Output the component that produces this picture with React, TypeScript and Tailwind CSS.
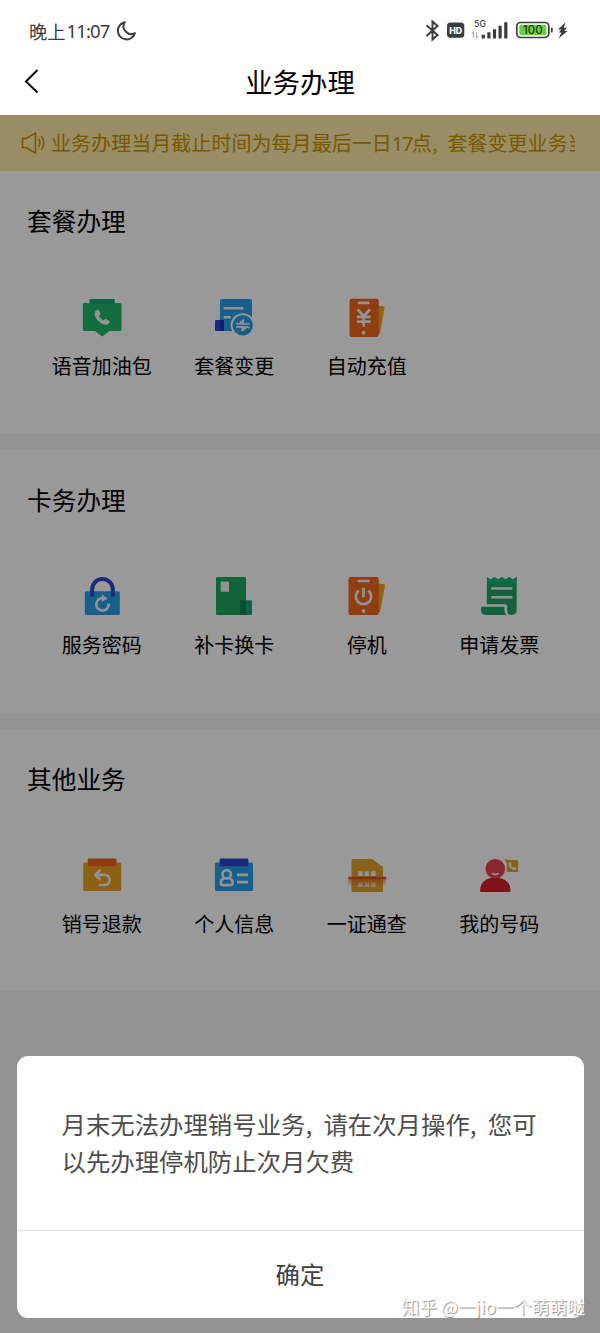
import { ReactNode } from 'react';

interface Service {
  label: string;
  icon: ReactNode;
}

interface ServiceGroup {
  title: string;
  items: Service[];
}

const LIGHT = '#f4f4f4';

function Icon({ children }: { children: ReactNode }) {
  return (
    <svg width="44" height="44" viewBox="0 0 44 44" fill="none">
      {children}
    </svg>
  );
}

const handset =
  'M-4.9 -7.2c-1.7 .6 -2.9 2 -2.6 4.2c.7 5 5.500 9.700 10.700 10.400c2 .2 3.800 -1 4.300 -2.700c.2 -.6 0 -1 -.5 -1.300l-3.200 -1.700c-.5 -.3 -1 -.2 -1.300 .2l-1.100 1.300c-2.200 -1 -3.700 -2.600 -4.600 -4.700l1.200 -1.200c.4 -.4 .4 -.8 .2 -1.300l-1.500 -3c-.3 -.5 -.9 -.5 -1.600 -.2z';

const groups: ServiceGroup[] = [
  {
    title: '套餐办理',
    items: [
      {
        label: '语音加油包',
        icon: (
          <Icon>
            <path d="M4.300 8h35.700a1.500 1.500 0 0 1 1.500 1.500v25a1.500 1.500 0 0 1-1.500 1.500h-10.500l-7.300 5.500l-7.300-5.500h-10.600a1.500 1.500 0 0 1-1.500-1.500v-25a1.500 1.500 0 0 1 1.500-1.500z" fill="#1fb868" />
            <rect x="9.500" y="4" width="25.300" height="5" rx="1" fill="#19a578" />
            <path d={handset} transform="translate(22.200 22.300)" fill={LIGHT} />
          </Icon>
        ),
      },
      {
        label: '套餐变更',
        icon: (
          <Icon>
            <rect x="8" y="4" width="32" height="32" rx="1.500" fill="#2b9fe8" />
            <path d="M11.700 13.200h19.600M11.700 22.300h7" stroke={LIGHT} strokeWidth="2.500" />
            <rect x="3" y="25" width="9" height="11" rx="1" fill="#2b43e0" />
            <rect x="8" y="25" width="4" height="11" fill="#2031c0" />
            <circle cx="30.700" cy="30.300" r="12" fill="#fff" />
            <circle cx="30.700" cy="30.300" r="10.200" fill="#2b9fe8" />
            <path d="M37.500 29h-9q-3.500 0-4.500-1M24 31.900h9q3.500 0 4.500 1" stroke={LIGHT} strokeWidth="1.700" />
            <path d="M32 23.700v6.100l-5-2.500zM29.500 37.100v-6.100l5 2.500z" fill={LIGHT} />
          </Icon>
        ),
      },
      {
        label: '自动充值',
        icon: (
          <Icon>
            <path d="M31 10l7.500 1.500q1.200.3 1 1.500l-4.500 25q-.3 1.200-1.500 1.200h-2.500z" fill="#eda41d" />
            <rect x="4.500" y="3.700" width="29.300" height="38.300" rx="2.200" fill="#f0661d" />
            <path d="M14 7.900h9.300" stroke={LIGHT} strokeWidth="2.800" strokeLinecap="round" />
            <path d="M12.600 14.500l6.200 6.500l6.200-6.500M18.800 21v10.700M12 21.800h13.600M12 26.700h13.600" stroke={LIGHT} strokeWidth="2.700" />
            <circle cx="18.600" cy="37.700" r="2" fill={LIGHT} />
          </Icon>
        ),
      },
    ],
  },
  {
    title: '卡务办理',
    items: [
      {
        label: '服务密码',
        icon: (
          <Icon>
            <rect x="4.800" y="18.300" width="35" height="23.700" rx="1.500" fill="#2b9fe8" />
            <path d="M12.200 23.500v-7.200a10.300 10.300 0 0 1 20.600 0v7.200" stroke="#2f46cf" strokeWidth="4" />
            <path d="M28.600 30.500a6.200 6.200 0 1 1-5.500-5.300" stroke={LIGHT} strokeWidth="2.700" />
            <path d="M22.200 21.300l5.300 4.500l-5.800 3.200z" fill={LIGHT} />
          </Icon>
        ),
      },
      {
        label: '补卡换卡',
        icon: (
          <Icon>
            <rect x="4" y="4" width="30" height="38" rx="1.500" fill="#1fa95c" />
            <rect x="8.700" y="8.600" width="8.300" height="10.200" fill={LIGHT} />
            <rect x="28.300" y="27.300" width="11.700" height="14.700" rx="1" fill="#17a577" />
            <path d="M28.300 27.300h5.700v14.700h-5.700z" fill="#118054" />
          </Icon>
        ),
      },
      {
        label: '停机',
        icon: (
          <Icon>
            <path d="M31 10l8 1.300q1.200.3 1 1.500l-4.800 25.500q-.3 1.200-1.500 1.200h-2.700z" fill="#eda41d" />
            <rect x="3.500" y="4" width="30.300" height="38" rx="2.200" fill="#f0661d" />
            <path d="M13.500 8h10.300" stroke={LIGHT} strokeWidth="2.300" strokeLinecap="round" />
            <path d="M13.700 17.500a7.700 7.700 0 1 0 9.600 0M18.500 14.700v9.600" stroke={LIGHT} strokeWidth="2.700" />
            <circle cx="18.700" cy="38" r="1.900" fill={LIGHT} />
          </Icon>
        ),
      },
      {
        label: '申请发票',
        icon: (
          <Icon>
            <path d="M10 4l3.700 2.500l3.700-2.500l3.700 2.500l3.700-2.500l3.700 2.500l3.700-2.500l3.700 2.500l3.800-2.500v33q0 4.800-4.500 4.800h-3l-22.500-9z" fill="#1fa568" />
            <path d="M10 4l3.700 2.500l3.700-2.500l3.700 2.500l3.700-2.500l3.700 2.500l3.700-2.500l3.700 2.500l3.800-2.500v5h-29.700z" fill="#18b483" />
            <path d="M14.300 15.600h21M14.300 24.300h21" stroke={LIGHT} strokeWidth="2.500" />
            <path d="M2 31.300h26.500q1.700 0 1.700 1.700v5q.3 3.500 3 4.500h-31.200z" fill="#fff" />
            <path d="M4 33.700h23.500v4q.2 3 2 4.200h-20q-5 0-5.500-4.500z" fill="#1fa568" />
          </Icon>
        ),
      },
    ],
  },
  {
    title: '其他业务',
    items: [
      {
        label: '销号退款',
        icon: (
          <Icon>
            <rect x="3.200" y="10.500" width="38" height="28.500" rx="1.500" fill="#eaa123" />
            <rect x="7.800" y="6.500" width="28.700" height="7.700" rx="1.300" fill="#ee641c" />
            <path d="M16.500 22.800h8a5.100 5.100 0 0 1 0 10.200h-5.500" stroke={LIGHT} strokeWidth="2.700" />
            <path d="M20.500 17.800l-5.200 5l5.200 5" stroke={LIGHT} strokeWidth="2.700" />
          </Icon>
        ),
      },
      {
        label: '个人信息',
        icon: (
          <Icon>
            <rect x="3" y="10.500" width="38" height="28.500" rx="1.500" fill="#2b9fe8" />
            <rect x="7.700" y="6.500" width="28.700" height="7.700" rx="1.300" fill="#2b45d6" />
            <circle cx="14.700" cy="22.300" r="4.200" stroke={LIGHT} strokeWidth="2.700" />
            <path d="M11.700 26.500q-3 1.200-3 4.300q0 2.300 2.300 2.300h7.400q2.300 0 2.300-2.300q0-3.100-3-4.300" stroke={LIGHT} strokeWidth="2.600" />
            <path d="M25 22.800h11M25 30.200h11" stroke={LIGHT} strokeWidth="2.700" />
          </Icon>
        ),
      },
      {
        label: '一证通查',
        icon: (
          <Icon>
            <defs>
              <linearGradient id="scan" x1="0" y1="0" x2="0" y2="1">
                <stop offset="0" stopColor="#e8541c" stopOpacity=".75" />
                <stop offset="1" stopColor="#e8541c" stopOpacity="0" />
              </linearGradient>
            </defs>
            <path d="M8 7h19.200l10.800 8v23.500q0 1.500-1.500 1.500h-28.500q-1.500 0-1.500-1.500v-30q0-1.500 1.500-1.500z" fill="#e2a02b" />
            <path d="M13.200 19.300h4.700v4.700h-4.700zM19.600 19.300h4.700v4.700h-4.700zM26 19.300h4.700v4.700h-4.700z" fill={LIGHT} />
            <path d="M13.200 30.300h4.700v4.700h-4.700zM19.600 30.300h4.700v4.700h-4.700zM26 30.300h4.700v4.700h-4.700z" fill={LIGHT} opacity=".7" />
            <path d="M3.500 25h37.700v9.500h-37.700z" fill="url(#scan)" />
            <path d="M3.500 24.800h37.700v2h-37.700z" fill="#dc4a16" />
          </Icon>
        ),
      },
      {
        label: '我的号码',
        icon: (
          <Icon>
            <path d="M3 38.500q.8-12.500 15.300-13q14.600.5 15.400 13q0 1.500-1.500 1.500h-27.700q-1.500 0-1.500-1.500z" fill="#d3202f" />
            <circle cx="18.300" cy="16.800" r="9.800" fill="#e8424a" />
            <path d="M15.300 21q3 3.400 6 0" stroke={LIGHT} strokeWidth="1.800" />
            <path d="M27.500 6.500l3.200 1.500h9q1.500 0 1.500 1.500v9q0 1.500-1.500 1.500h-8.500q-1.500 0-1.500-1.500v-7z" fill="#e5a32b" />
            <path d={handset} transform="translate(35.500 14) scale(.52)" fill={LIGHT} />
          </Icon>
        ),
      },
    ],
  },
];

function StatusBar() {
  return (
    <div className="flex h-[60px] items-center justify-between pl-[29px] pr-8 pt-0.5 text-[#3c3c3c]">
      <div className="flex items-center">
        <span className="text-[18.300px] leading-6">晚上</span>
        <span className="ml-px w-[46px] font-['Noto_Sans',sans-serif] text-[18.500px] leading-6 tracking-[-0.900px]">11:07</span>
        <svg className="ml-[3px]" width="20" height="20" viewBox="0 0 20 20" fill="none">
          <path d="M8.700 1.200a8.700 8.700 0 1 0 10.200 11a7.800 7.800 0 0 1-10.200-11z" stroke="#3c3c3c" strokeWidth="2" strokeLinejoin="round" />
        </svg>
      </div>
      <svg width="144" height="24" viewBox="0 0 144 24" fill="none">
        {/* bluetooth */}
        <path d="M2.500 6.300l11 9.800l-5 4.500v-18l5 4.500l-11 9.800" stroke="#3c3c3c" strokeWidth="2" />
        {/* hd voice */}
        <rect x="23" y="3.500" width="17.300" height="15.300" rx="3.500" fill="#3c3c3c" />
        <text x="31.700" y="14.500" textAnchor="middle" fontSize="8.800" fontWeight="800" fill="#fff" fontFamily="Inter, sans-serif">HD</text>
        {/* mobile signal */}
        <text x="50" y="8.300" fontSize="8.800" fontWeight="500" fill="#3c3c3c" fontFamily="Inter, sans-serif">5G</text>
        <path d="M49.500 19v-6l-1.500 2M52.500 13.500v5.500l1.500-2" stroke="#aaa" strokeWidth="1.100" />
        <path d="M59.300 15.800v3.700M64.900 13.300v6.200M70.500 10.300v9.200M76.100 6.800v12.700M81.800 3.300v16.200" stroke="#3c3c3c" strokeWidth="3.200" strokeLinecap="butt" />
        {/* battery */}
        <rect x="92.800" y="3.500" width="32" height="15" rx="4" stroke="#3c3c3c" strokeWidth="1.700" />
        <rect x="95.300" y="5.800" width="27" height="10.400" rx="2" fill="#66d13b" />
        <text x="108.800" y="15.200" textAnchor="middle" fontSize="11.500" fontWeight="500" fill="#1f3a16" fontFamily="Inter, sans-serif">100</text>
        <path d="M127.800 8.800v4.500" stroke="#3c3c3c" strokeWidth="1.800" />
        <path d="M141.500 3.200l-7.500 7.300h3.200l-2.300 3h2.500l-2.800 6l9-7.500h-3.200l2.500-3.200h-3.200z" fill="#3c3c3c" />
      </svg>
    </div>
  );
}

function NoticeBar() {
  return (
    <div className="flex h-14 items-center bg-[#ffeba8] pr-[25px] pl-[21px] text-[#c99400]">
      <svg className="mr-[5px] shrink-0" width="25" height="24" viewBox="0 0 25 24" fill="none" stroke="#c99400" strokeWidth="1.600">
        <path d="M1.500 7.500h3.500l9.500-5.500v20l-9.500-5.500h-3.500z" />
        <path d="M17.500 8q2.800 4 0 8M20.300 5q5 7 0 14" />
      </svg>
      <p className="flex-1 overflow-hidden text-[20px] leading-7 tracking-[0.050px] whitespace-nowrap">
        业务办理当月截止时间为每月最后一日
        <span className="inline-block w-[20px] font-['Noto_Sans',sans-serif] tracking-[-1.300px]">17</span>点
        <span className="inline-block w-[15.500px]">,</span>套餐变更业务当月截止
      </p>
    </div>
  );
}

function Section({ title, items }: ServiceGroup) {
  return (
    <section className="h-[262.800px] bg-white pt-[31px]">
      <h2 className="pl-[27px] text-[24.700px] leading-9">{title}</h2>
      <div className="mt-[56.500px] grid grid-cols-4 pl-[35.500px] pr-[34.500px]">
        {items.map((item) => (
          <div key={item.label} className="flex flex-col items-center">
            {item.icon}
            <span className="mt-[11.500px] text-[20px] leading-8 whitespace-nowrap">{item.label}</span>
          </div>
        ))}
      </div>
    </section>
  );
}

function ConfirmDialog() {
  return (
    <div className="absolute inset-x-0 top-[115px] bottom-0 flex flex-col justify-end bg-black/40 px-[16.500px] pb-[15px]">
      <div className="h-[262px] rounded-[11px] bg-white text-[24.400px] text-[#4d4d4d]">
        <div className="h-[175px] border-b border-[#dedede] pt-[50px] pl-[45px] leading-[36.700px] whitespace-nowrap">
          <p>
            月末无法办理销号业务<span className="inline-block w-[18px]">,</span>请在次月操作
            <span className="inline-block w-[18px]">,</span>您可
          </p>
          <p>以先办理停机防止次月欠费</p>
        </div>
        <button className="h-[86px] w-full text-[#404040]">确定</button>
      </div>
    </div>
  );
}

export default function App() {
  return (
    <div className="relative h-[1333px] w-[600px] overflow-hidden bg-[#f5f5f5] font-['Noto_Sans_CJK_SC',sans-serif] text-black">
      <header className="h-[115px] bg-white">
        <StatusBar />
        <div className="grid h-[42px] grid-cols-[60px_1fr_60px] items-center">
          <svg className="ml-6" width="16" height="26" viewBox="0 0 16 26" fill="none">
            <path d="M13.500 2l-11.500 11.500l11.500 11" stroke="#111" strokeWidth="2.100" />
          </svg>
          <h1 className="text-center text-[27.400px] leading-10">业务办理</h1>
        </div>
      </header>
      <NoticeBar />
      <main className="flex flex-col gap-4">
        {groups.map((group) => (
          <Section key={group.title} title={group.title} items={group.items} />
        ))}
      </main>

      <ConfirmDialog />

      {/* Watermark */}
      <div className="absolute right-[15px] bottom-[13px] text-[17.800px] leading-7 whitespace-nowrap text-white/90 [text-shadow:1px_1px_1px_#8a8a8a]">
        知乎 @一jio一个萌萌哒
      </div>
    </div>
  );
}
